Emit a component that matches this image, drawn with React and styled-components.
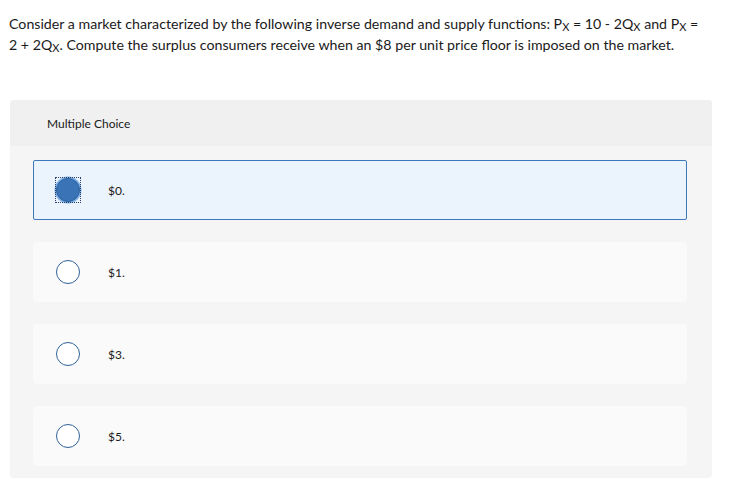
import React, { useState } from "react";
import styled, { createGlobalStyle } from "styled-components";

const GlobalStyle = createGlobalStyle`
  html, body {
    margin: 0;
    padding: 0;
    background: #ffffff;
  }
  body {
    font-family: Lato, "Open Sans", Arial, sans-serif;
    color: #1a1a1a;
  }
`;

const choices = ["$0.", "$1.", "$3.", "$5."];

export default function App() {
  const [selected, setSelected] = useState(0);

  return (
    <>
      <GlobalStyle />
      <Page>
        <Question>
          Consider a market characterized by the following inverse demand and
          supply functions: P<Sub>X</Sub> = 10 - 2Q<Sub>X</Sub> and P
          <Sub>X</Sub> = 2 + 2Q<Sub>X</Sub>. Compute the surplus consumers
          receive when an $8 per unit price floor is imposed on the market.
        </Question>
        <Panel>
          <PanelHeader>Multiple Choice</PanelHeader>
          <ChoiceList>
            {choices.map((label, i) => (
              <Choice
                key={label}
                $active={selected === i}
                onClick={() => setSelected(i)}
              >
                <RadioWrap $active={selected === i}>
                  <Radio $active={selected === i} />
                </RadioWrap>
                <ChoiceText>{label}</ChoiceText>
              </Choice>
            ))}
          </ChoiceList>
        </Panel>
      </Page>
    </>
  );
}

const Page = styled.div`
  padding: 13px 38px 10px 9px;
`;

const Question = styled.p`
  margin: 0 0 45px 0;
  font-size: 14.2px;
  line-height: 21px;
  color: #1a1a1a;
`;

const Sub = styled.span`
  font-size: 11px;
  vertical-align: -2px;
  line-height: 0;
`;

const Panel = styled.div`
  margin-left: 1px;
  width: 702px;
  background: #f5f5f5;
  border-radius: 4px;
  overflow: hidden;
`;

const PanelHeader = styled.div`
  height: 46px;
  background: #f0f0f0;
  display: flex;
  align-items: center;
  padding-left: 37px;
  font-size: 12px;
  color: #1a1a1a;
`;

const ChoiceList = styled.div`
  display: flex;
  flex-direction: column;
  gap: 22px;
  padding: 14px 25px 12px 23px;
`;

const Choice = styled.div`
  height: 58px;
  display: flex;
  align-items: center;
  padding-left: 21px;
  border-radius: ${(p) => (p.$active ? "2px" : "4px")};
  border: 1px solid ${(p) => (p.$active ? "#3d78bd" : "#fafafa")};
  background: ${(p) => (p.$active ? "#ebf3fc" : "#fafafa")};
  cursor: pointer;
`;

const RadioWrap = styled.div`
  width: 26px;
  height: 26px;
  display: flex;
  align-items: center;
  justify-content: center;
  outline: ${(p) => (p.$active ? "1px dotted #2a3f66" : "none")};
  outline-offset: -1px;
`;

const Radio = styled.div`
  width: 22px;
  height: 22px;
  border-radius: 50%;
  border: 1.5px solid #2f6299;
  background: ${(p) => (p.$active ? "#3a74b6" : "#ffffff")};
  box-shadow: ${(p) => (p.$active ? "0 0 0 1.5px #7fb0ea" : "none")};
`;

const ChoiceText = styled.span`
  margin-left: 27px;
  font-size: 12px;
  color: #1a1a1a;
`;
